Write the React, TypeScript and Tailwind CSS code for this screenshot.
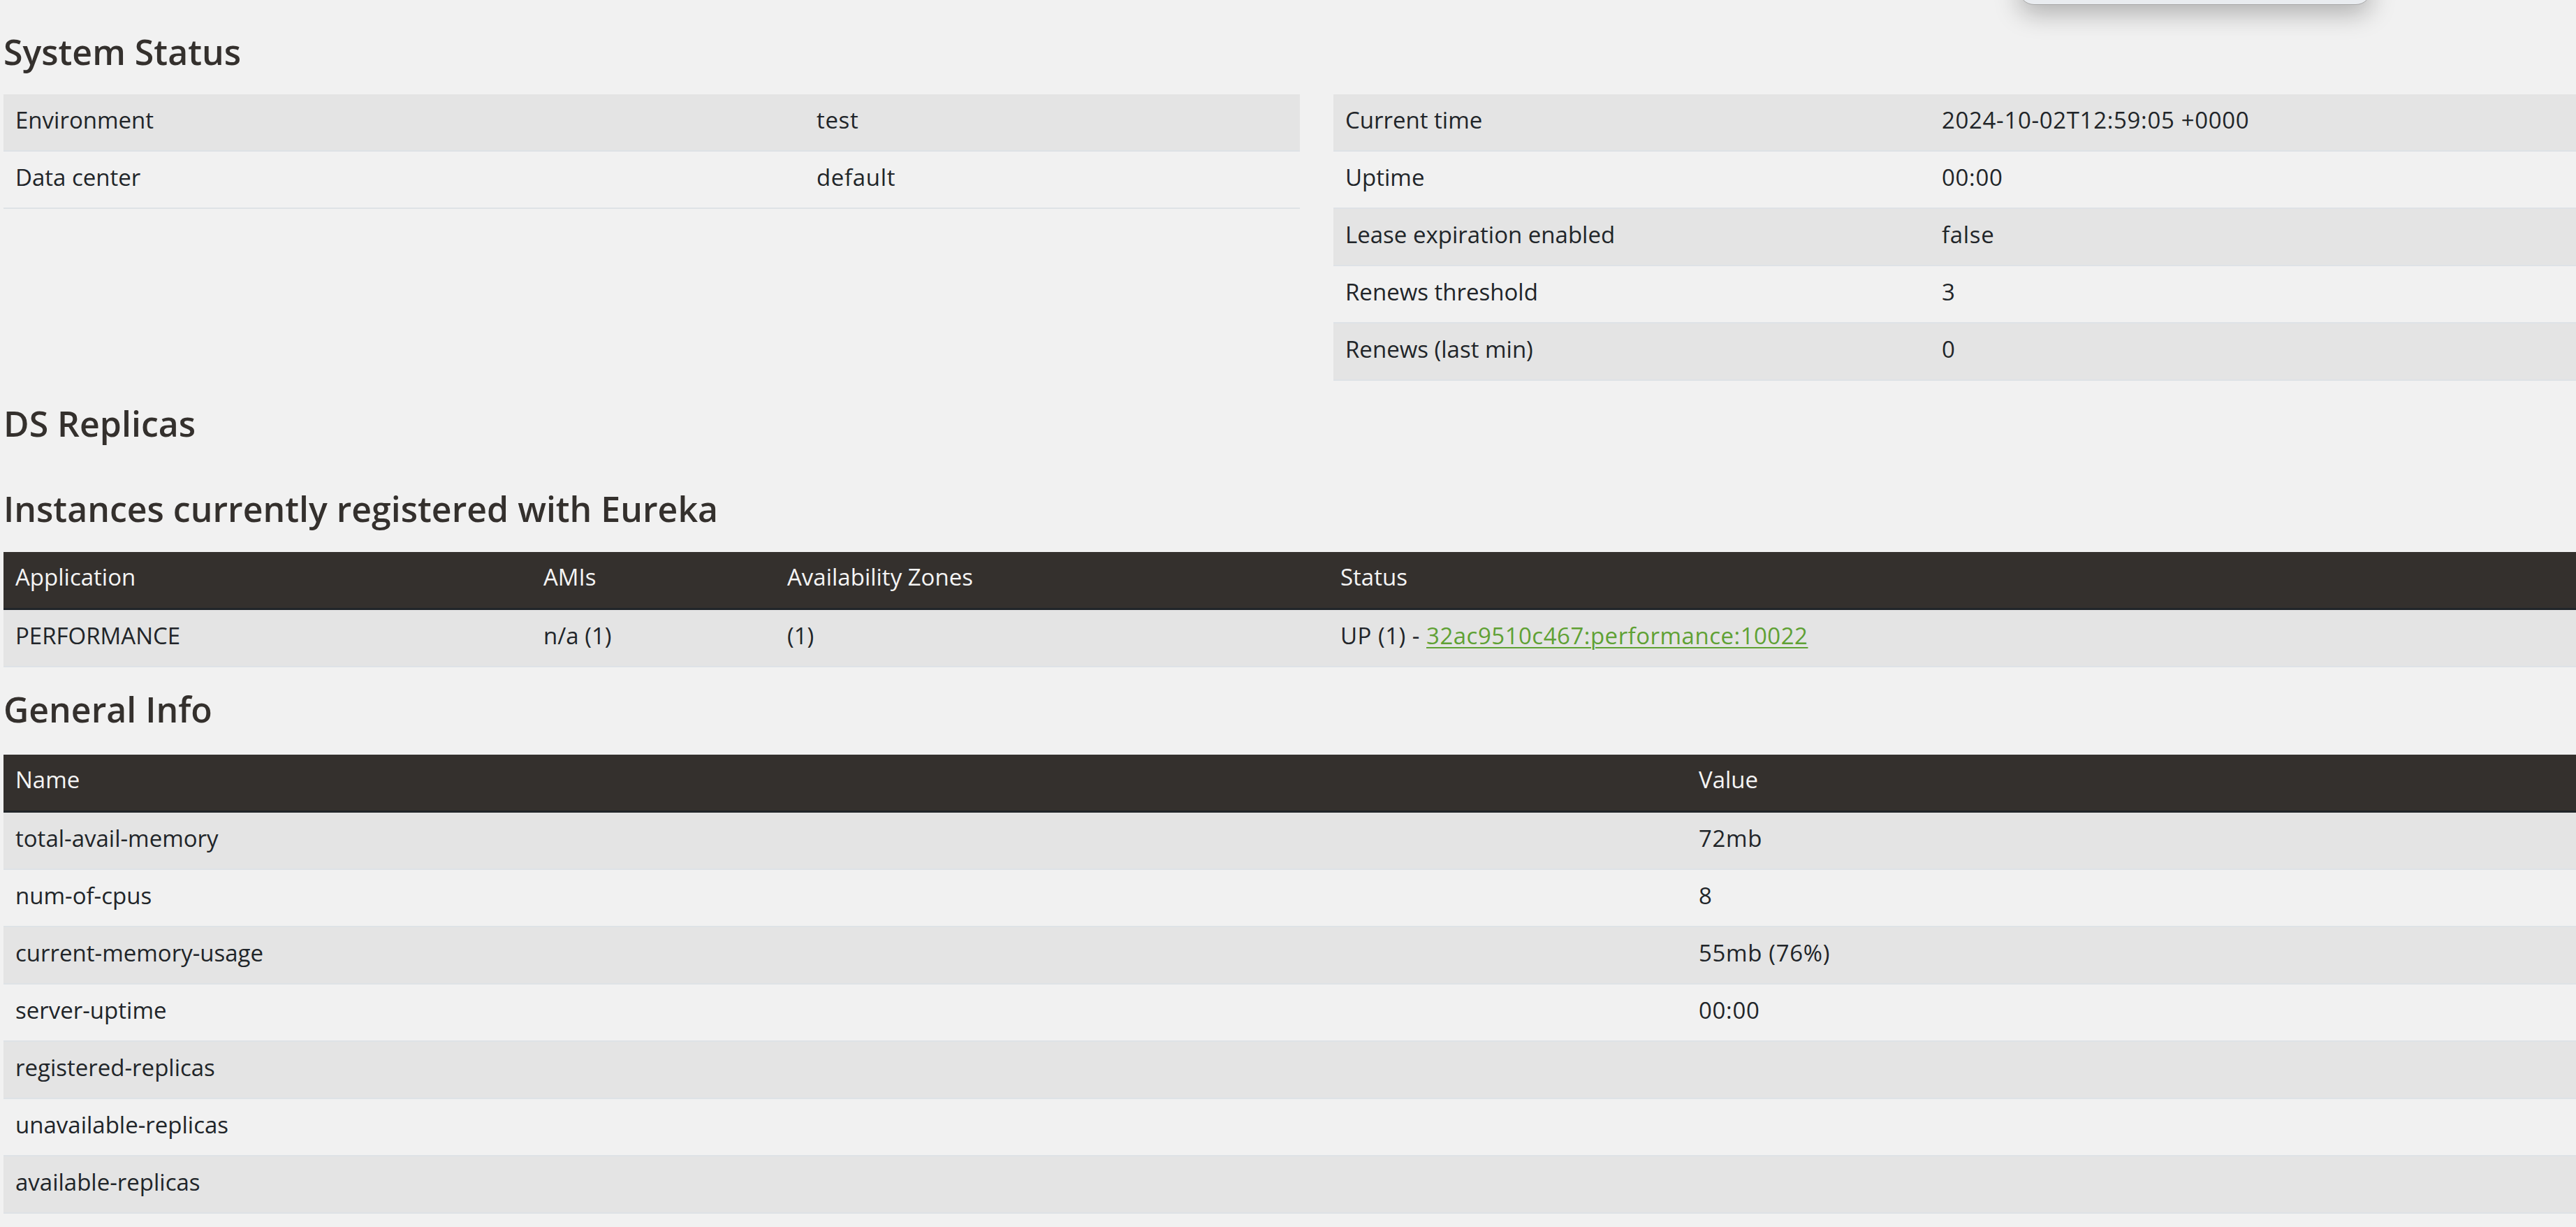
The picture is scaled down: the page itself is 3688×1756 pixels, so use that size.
const systemLeft = [
  ["Environment", "test"],
  ["Data center", "default"],
];

const systemRight = [
  ["Current time", "2024-10-02T12:59:05 +0000"],
  ["Uptime", "00:00"],
  ["Lease expiration enabled", "false"],
  ["Renews threshold", "3"],
  ["Renews (last min)", "0"],
];

const generalInfo = [
  ["total-avail-memory", "72mb"],
  ["num-of-cpus", "8"],
  ["current-memory-usage", "55mb (76%)"],
  ["server-uptime", "00:00"],
  ["registered-replicas", ""],
  ["unavailable-replicas", ""],
  ["available-replicas", ""],
];

const cell = "px-[17px] pt-[15px] pb-[21px] leading-[44px] border-b-2 border-[#dee2e6] text-left align-top";
const head = "px-[17px] pt-[14px] pb-[22px] leading-[44px] border-b-[3px] border-[#212529] text-left align-top font-normal text-[#f4f4f4]";

function Heading({ children, className = "" }: { children: React.ReactNode; className?: string }) {
  return (
    <h2 className={`text-[50px] leading-[58px] font-semibold text-[#34302d] ${className}`}>
      {children}
    </h2>
  );
}

function KeyValueTable({ rows, first }: { rows: string[][]; first: string }) {
  return (
    <table className="w-full table-fixed border-collapse">
      <colgroup>
        <col className={first} />
        <col />
      </colgroup>
      <tbody>
        {rows.map(([k, v], i) => (
          <tr key={k} className={i % 2 === 0 ? "bg-[#e4e4e4]" : ""}>
            <td className={cell}>{k}</td>
            <td className={`${cell} tracking-[0.02em]`}>{v}</td>
          </tr>
        ))}
      </tbody>
    </table>
  );
}

export default function App() {
  return (
    <div className="relative w-[3688px] h-[1756px] overflow-hidden bg-[#f1f1f1] font-['Open_Sans','Liberation_Sans',sans-serif] text-[33px] text-[#212529]">
      {/* dropdown edge peeking from the top */}
      <div className="absolute left-[2890px] top-[-40px] w-[505px] h-[47px] rounded-[22px] border border-[#a9a9a9] bg-[#e9ecf0] shadow-[0_12px_36px_rgba(0,0,0,0.28)]" />

      <div className="w-[3765px] pl-[5px] pt-[45px]">
        <Heading>System Status</Heading>

        <div className="mt-[32px] flex gap-[48px] items-start">
          <div className="w-[1856px]">
            <KeyValueTable rows={systemLeft} first="w-[1147px]" />
          </div>
          <div className="w-[1856px]">
            <KeyValueTable rows={systemRight} first="w-[854px]" />
          </div>
        </div>

        <Heading className="mt-[32px]">DS Replicas</Heading>

        <Heading className="mt-[64px]">Instances currently registered with Eureka</Heading>

        <table className="mt-[33px] w-full table-fixed border-collapse">
          <colgroup>
            <col className="w-[756px]" />
            <col className="w-[349px]" />
            <col className="w-[792px]" />
            <col />
          </colgroup>
          <thead className="bg-[#34302d]">
            <tr>
              <th className={head}>Application</th>
              <th className={head}>AMIs</th>
              <th className={head}>Availability Zones</th>
              <th className={head}>Status</th>
            </tr>
          </thead>
          <tbody>
            <tr className="bg-[#e4e4e4]">
              <td className={cell}>PERFORMANCE</td>
              <td className={cell}>n/a (1)</td>
              <td className={cell}>(1)</td>
              <td className={`${cell} tracking-[0.015em]`}>
                UP (1) -{" "}
                <a href="#" className="text-[#5fa134] underline decoration-2 underline-offset-[4px]">
                  32ac9510c467:performance:10022
                </a>
              </td>
            </tr>
          </tbody>
        </table>

        <Heading className="mt-[31px]">General Info</Heading>

        <table className="mt-[36px] w-full table-fixed border-collapse">
          <colgroup>
            <col className="w-[2410px]" />
            <col />
          </colgroup>
          <thead className="bg-[#34302d]">
            <tr>
              <th className={head}>Name</th>
              <th className={head}>Value</th>
            </tr>
          </thead>
          <tbody>
            {generalInfo.map(([k, v], i) => (
              <tr key={k} className={i % 2 === 0 ? "bg-[#e4e4e4]" : ""}>
                <td className={cell}>{k}</td>
                <td className={`${cell} tracking-[0.02em]`}>{v}</td>
              </tr>
            ))}
          </tbody>
        </table>
      </div>
    </div>
  );
}
